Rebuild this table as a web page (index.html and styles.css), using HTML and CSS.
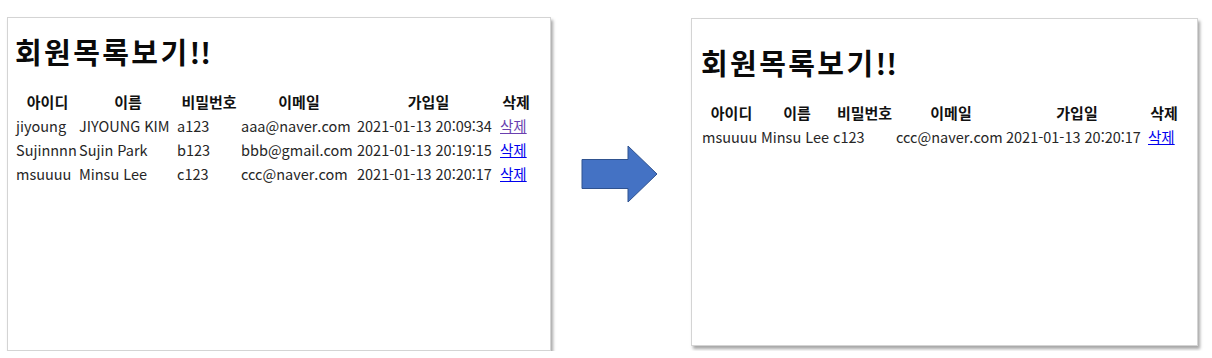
FILE: index.html
```html
<!DOCTYPE html>
<html lang="ko">
<head>
<meta charset="utf-8">
<title>회원목록보기</title>
<link rel="stylesheet" href="styles.css">
</head>
<body>
<div class="stage">
  <section class="window window-before">
    <h1 class="title">회원목록보기<span class="bang">!!</span></h1>
    <table class="members members-before">
      <colgroup>
        <col class="c-id"><col class="c-name"><col class="c-pw"><col class="c-mail"><col class="c-date"><col class="c-del">
      </colgroup>
      <thead>
        <tr><th>아이디</th><th>이름</th><th>비밀번호</th><th>이메일</th><th>가입일</th><th>삭제</th></tr>
      </thead>
      <tbody>
        <tr><td>jiyoung</td><td>JIYOUNG KIM</td><td>a123</td><td>aaa@naver.com</td><td>2021-01-13 20:09:34</td><td><a class="del visited" href="#">삭제</a></td></tr>
        <tr><td>Sujinnnn</td><td>Sujin Park</td><td>b123</td><td>bbb@gmail.com</td><td>2021-01-13 20:19:15</td><td><a class="del" href="#">삭제</a></td></tr>
        <tr><td>msuuuu</td><td>Minsu Lee</td><td>c123</td><td>ccc@naver.com</td><td>2021-01-13 20:20:17</td><td><a class="del" href="#">삭제</a></td></tr>
      </tbody>
    </table>
  </section>

  <svg class="arrow" width="78" height="60" viewBox="0 0 78 60" aria-hidden="true">
    <path d="M1 14.5 H47 V1 L76 29 L47 57 V43.5 H1 Z" fill="#4472c4" stroke="#2f528f" stroke-width="1"/>
  </svg>

  <section class="window window-after">
    <h1 class="title">회원목록보기<span class="bang">!!</span></h1>
    <table class="members members-after">
      <colgroup>
        <col class="c-id"><col class="c-name"><col class="c-pw"><col class="c-mail"><col class="c-date"><col class="c-del">
      </colgroup>
      <thead>
        <tr><th>아이디</th><th>이름</th><th>비밀번호</th><th>이메일</th><th>가입일</th><th>삭제</th></tr>
      </thead>
      <tbody>
        <tr><td>msuuuu</td><td>Minsu Lee</td><td>c123</td><td>ccc@naver.com</td><td>2021-01-13 20:20:17</td><td><a class="del" href="#">삭제</a></td></tr>
      </tbody>
    </table>
  </section>
</div>
</body>
</html>
```

FILE: styles.css
```css
html, body {
  margin: 0;
  padding: 0;
  background: #ffffff;
}

body {
  font-family: "Noto Sans CJK KR", "Noto Sans", sans-serif;
  color: #111111;
}

.stage {
  display: flex;
  align-items: flex-start;
  padding: 17px 0 0 7px;
}

.window {
  box-sizing: border-box;
  background: #ffffff;
  border: 1px solid #d4d4d4;
  box-shadow: 2px 3px 3px rgba(0, 0, 0, 0.35);
}

.window-before {
  width: 544px;
  height: 334px;
  padding: 14px 0 0 7px;
}

.window-after {
  width: 507px;
  height: 328px;
  margin-top: 1px;
  margin-left: 32px;
  padding: 24px 0 0 9px;
}

.arrow {
  display: block;
  margin-top: 128px;
  margin-left: 30px;
}

.title {
  margin: 0;
  font-size: 29px;
  line-height: 38px;
  font-weight: 700;
  letter-spacing: 2.4px;
  color: #0a0a0a;
}

.title .bang {
  letter-spacing: 0;
}

.members {
  table-layout: fixed;
  border-collapse: collapse;
  font-size: 15px;
  line-height: 24px;
}

.members th {
  font-weight: 700;
  text-align: center;
  padding: 0;
  white-space: nowrap;
}

.members td {
  text-align: left;
  padding: 0;
  white-space: nowrap;
  font-size: 14.5px;
  color: #262626;
}

.members thead th {
  height: 24px;
}

.members-before {
  margin-top: 20px;
  margin-left: 1px;
}

.members-before .c-id { width: 63px; }
.members-before .c-name { width: 98px; }
.members-before .c-pw { width: 64px; }
.members-before .c-mail { width: 116px; }
.members-before .c-date { width: 143px; }
.members-before .c-del { width: 32px; }

.members-after {
  margin-top: 20px;
  margin-left: 1px;
}

.members-after .c-id { width: 59px; }
.members-after .c-name { width: 72px; }
.members-after .c-pw { width: 63px; }
.members-after .c-mail { width: 110px; }
.members-after .c-date { width: 142px; }
.members-after .c-del { width: 32px; }

.del {
  color: #0000ee;
  text-decoration: underline;
}

.del.visited {
  color: #6a3fb0;
}
```
